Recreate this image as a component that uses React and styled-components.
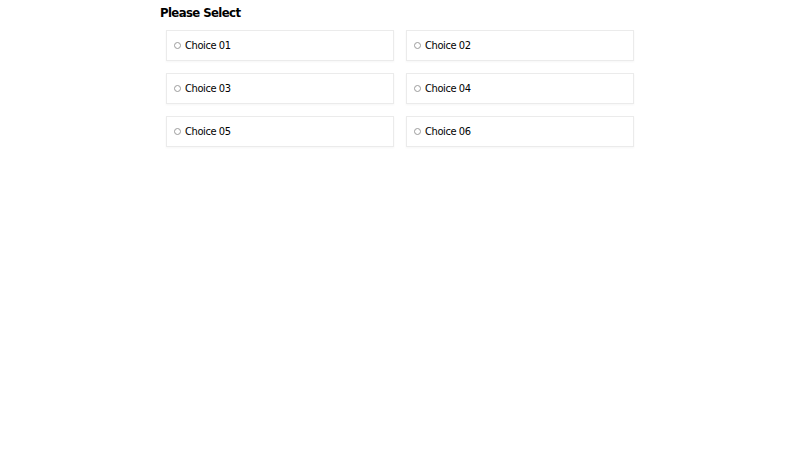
import React, { useState } from 'react';
import styled, { createGlobalStyle } from 'styled-components';

const GlobalStyle = createGlobalStyle`
  body {
    margin: 0;
    background: #fff;
    font-family: Tahoma, "DejaVu Sans Condensed", "DejaVu Sans", sans-serif;
    color: #000;
  }
`;

const choices = ['Choice 01', 'Choice 02', 'Choice 03', 'Choice 04', 'Choice 05', 'Choice 06'];

const App = () => {
  const [selected, setSelected] = useState(null);
  return (
    <Wrapper>
      <GlobalStyle />
      <Title>Please Select</Title>
      <ChoiceGrid>
        {choices.map((c) => (
          <Cell key={c}>
            <ChoiceBox onClick={() => setSelected(c)}>
              <Radio checked={selected === c} />
              <Label>{c}</Label>
            </ChoiceBox>
          </Cell>
        ))}
      </ChoiceGrid>
    </Wrapper>
  );
};

export default App;

const Wrapper = styled.div`
  width: 480px;
  margin: 0 auto;
`;

const Title = styled.h1`
  margin: 0;
  padding-top: 5px;
  font-size: 13px;
  line-height: 15px;
  letter-spacing: -0.6px;
  font-weight: bold;
  height: 19px;
`;

const ChoiceGrid = styled.div`
  display: grid;
  grid-template-columns: 1fr 1fr;
`;

const Cell = styled.div`
  padding: 6px;
`;

const ChoiceBox = styled.div`
  height: 31px;
  box-sizing: border-box;
  display: flex;
  align-items: center;
  padding-left: 7px;
  border: 1px solid #ebebeb;
  box-shadow: 0 1px 2px rgba(0, 0, 0, 0.04);
  background: #fff;
  cursor: pointer;
`;

const Radio = styled.span`
  width: 7px;
  height: 7px;
  box-sizing: border-box;
  border-radius: 50%;
  border: 1.5px solid ${(props) => (props.checked ? '#555' : '#9c9c9c')};
  background: ${(props) => (props.checked ? '#555' : 'transparent')};
  margin-right: 4px;
`;

const Label = styled.span`
  font-size: 11px;
  line-height: 13px;
  letter-spacing: -0.4px;
`;
